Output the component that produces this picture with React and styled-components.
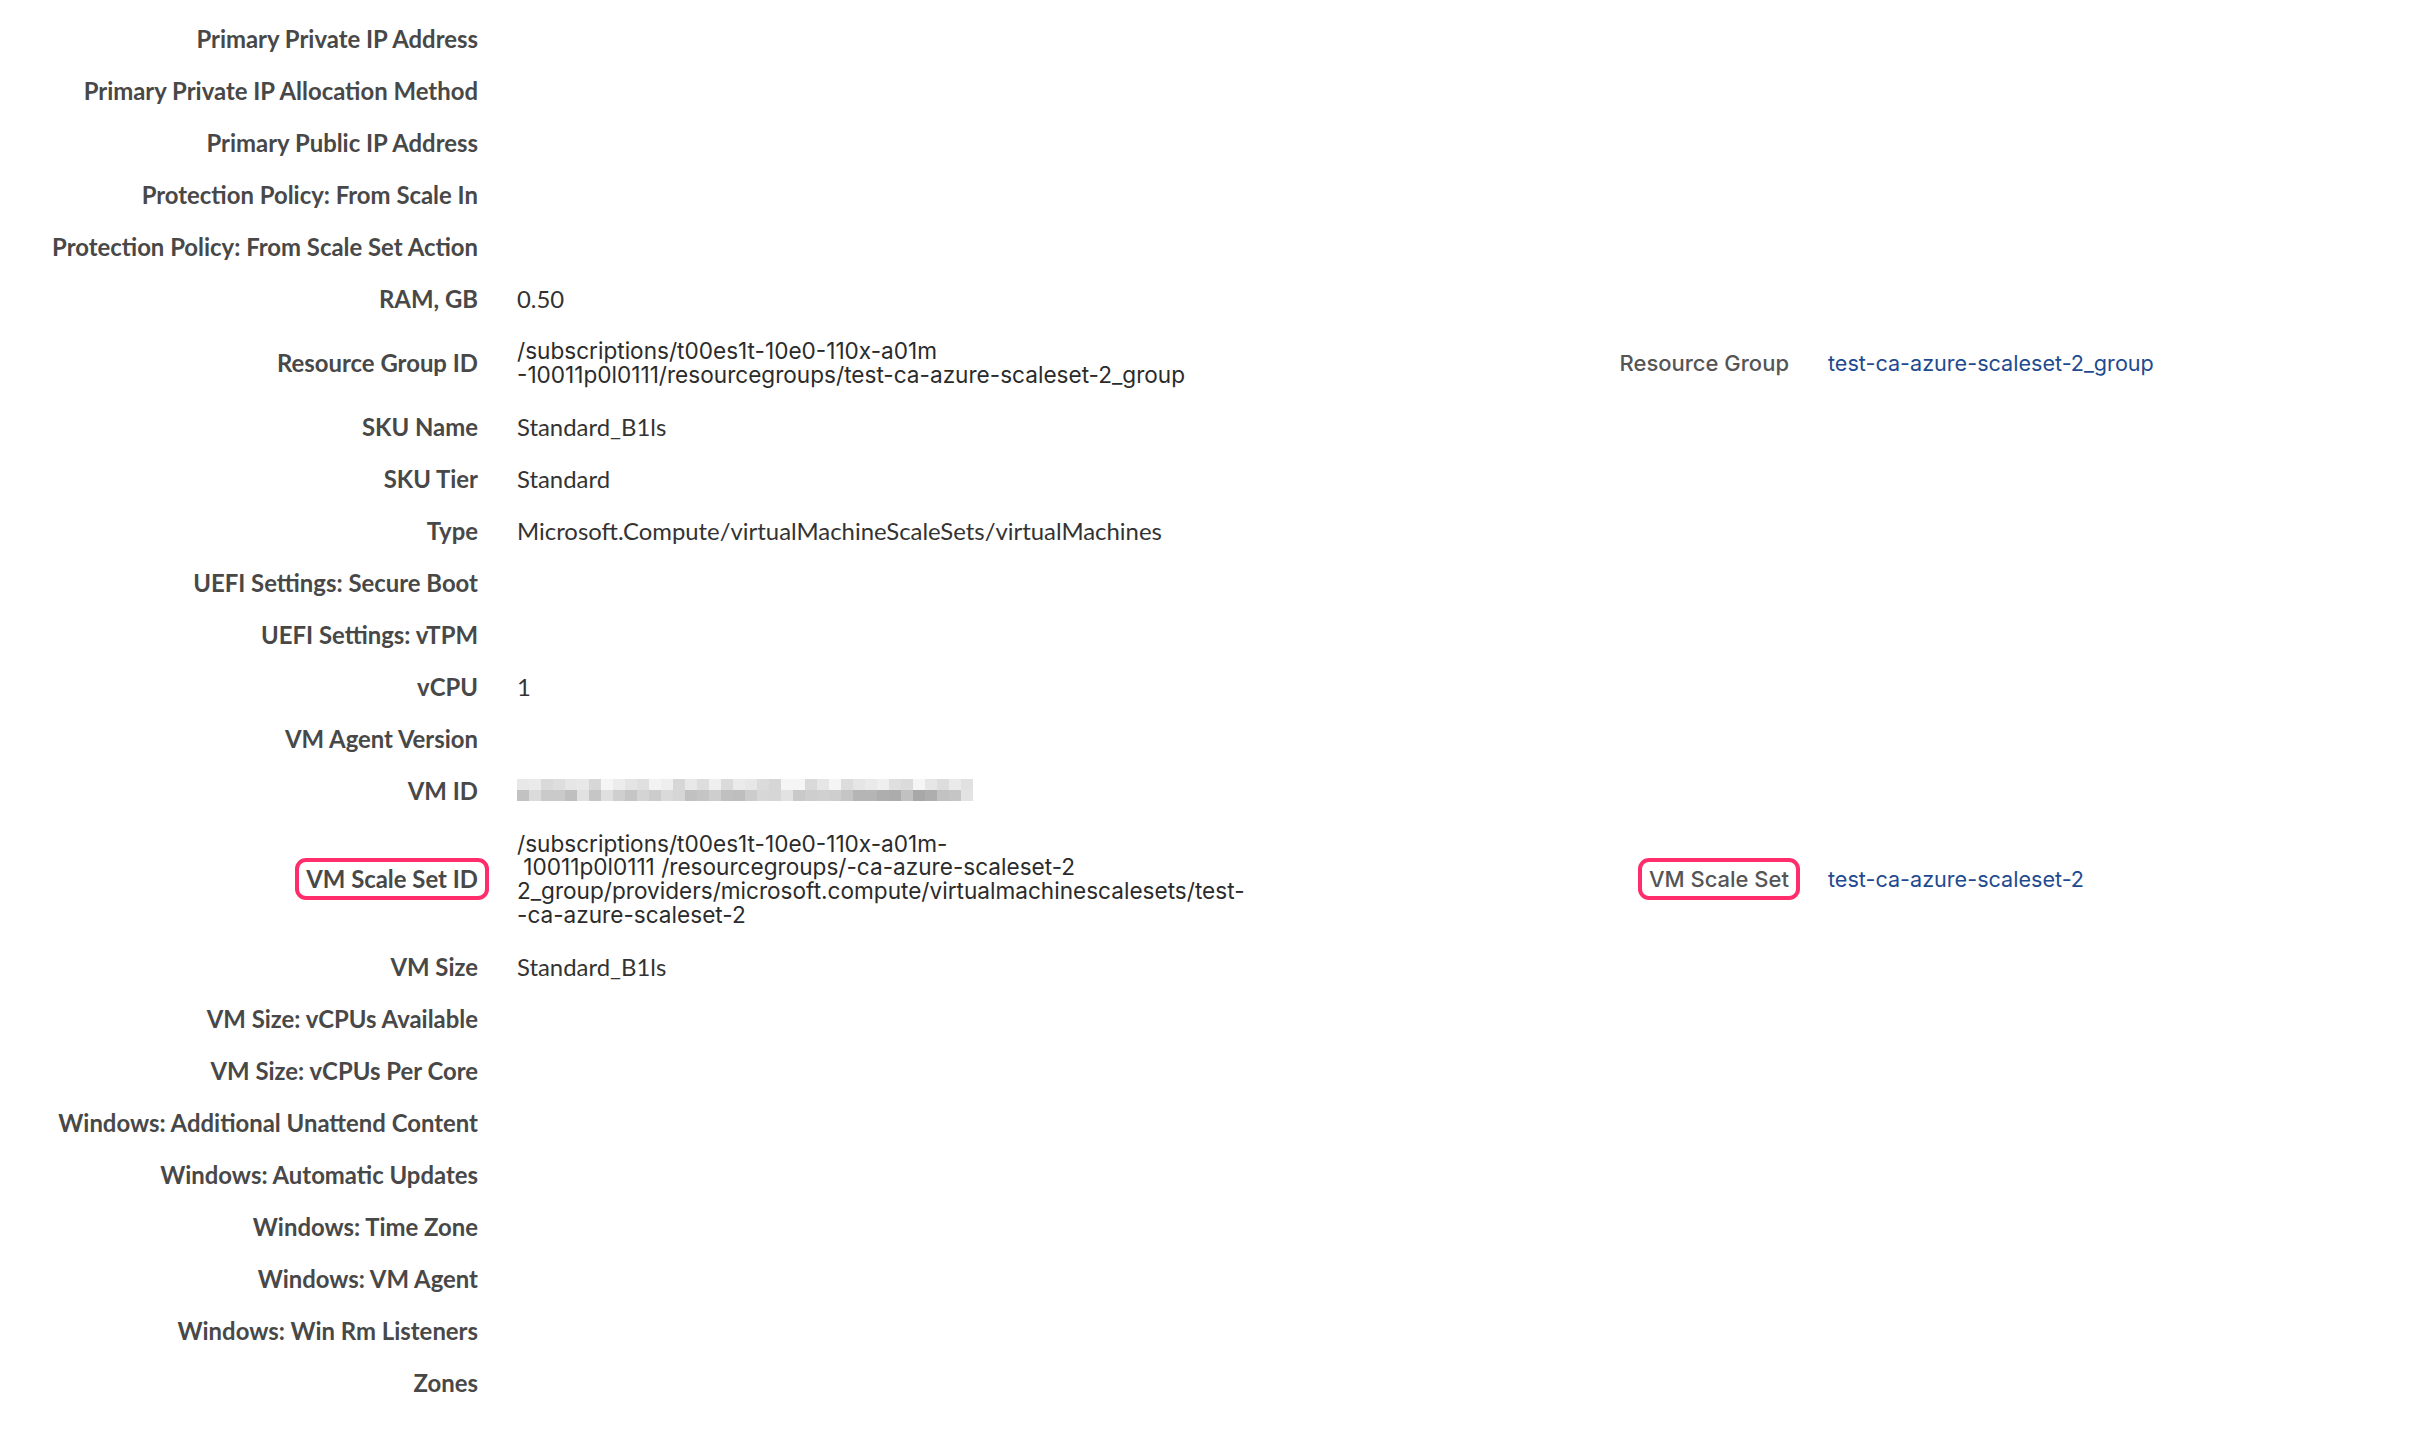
import React from "react";
import styled, { createGlobalStyle } from "styled-components";

const Global = createGlobalStyle`
  html, body { margin: 0; padding: 0; background: #ffffff; }
  body { font-family: Lato, "Open Sans", sans-serif; }
`;

const Page = styled.div`
  padding-top: 13px;
  display: flex;
  flex-direction: column;
`;

const Row = styled.div`
  display: grid;
  grid-template-columns: 478px 1063px 170px 1fr;
  column-gap: 39px;
  align-items: center;
  padding: 14px 0;
`;

const Label = styled.div`
  text-align: right;
  font-family: Lato, sans-serif;
  font-weight: 700;
  font-size: 23.9px;
  line-height: 24px;
  color: #484848;
  white-space: nowrap;
`;

const Value = styled.div`
  font-family: Lato, sans-serif;
  font-weight: 400;
  font-size: 23.9px;
  line-height: 24px;
  color: #333333;
  white-space: nowrap;
`;

const PathValue = styled.div`
  display: flex;
  flex-direction: column;
  font-family: Inter, "Liberation Sans", sans-serif;
  font-size: 22.6px;
  line-height: 23.75px;
  color: #2b2b2b;
  white-space: pre;
`;

const SideLabel = styled.div`
  text-align: right;
  font-family: Inter, "Liberation Sans", sans-serif;
  font-weight: 500;
  font-size: 22px;
  line-height: 24px;
  color: #555555;
  white-space: nowrap;
`;

const SideLink = styled.a`
  font-family: Inter, "Liberation Sans", sans-serif;
  font-size: 21.6px;
  line-height: 24px;
  color: #1f4a8f;
  text-decoration: none;
  white-space: nowrap;
`;

const Highlight = styled.span`
  display: inline-block;
  padding: 0 2px;
  margin-right: -2px;
  line-height: 24px;
  outline: 4px solid #ff2d6b;
  outline-offset: 5.5px;
  border-radius: 2px;
`;

const blurCells = (() => {
  const cells = [];
  let seed = 7;
  const rnd = () => {
    seed = (seed * 9301 + 49297) % 233280;
    return seed / 233280;
  };
  const cols = 38;
  for (let r = 0; r < 2; r++) {
    for (let c = 0; c < cols; c++) {
      const base = r === 0 ? 212 : 188;
      const v = Math.round(base + rnd() * 40 - (c > 26 && c < 37 && r === 1 ? 25 : 0));
      const g = Math.max(150, Math.min(245, v));
      cells.push({ x: c * 12, y: r * 11, fill: `rgb(${g},${g},${g})` });
    }
  }
  return cells;
})();

const Blurred = () => (
  <svg width="458" height="22" viewBox="0 0 458 22" aria-hidden="true">
    {blurCells.map((cell, i) => (
      <rect key={i} x={cell.x} y={cell.y} width="12" height="11" fill={cell.fill} />
    ))}
  </svg>
);

const rows = [
  { label: "Primary Private IP Address" },
  { label: "Primary Private IP Allocation Method" },
  { label: "Primary Public IP Address" },
  { label: "Protection Policy: From Scale In" },
  { label: "Protection Policy: From Scale Set Action" },
  { label: "RAM, GB", value: "0.50" },
  {
    label: "Resource Group ID",
    lines: [
      "/subscriptions/t00es1t-10e0-110x-a01m",
      "-10011p0l0111/resourcegroups/test-ca-azure-scaleset-2_group",
    ],
    sideLabel: "Resource Group",
    sideValue: "test-ca-azure-scaleset-2_group",
  },
  { label: "SKU Name", value: "Standard_B1ls" },
  { label: "SKU Tier", value: "Standard" },
  { label: "Type", value: "Microsoft.Compute/virtualMachineScaleSets/virtualMachines" },
  { label: "UEFI Settings: Secure Boot" },
  { label: "UEFI Settings: vTPM" },
  { label: "vCPU", value: "1" },
  { label: "VM Agent Version" },
  { label: "VM ID", blurred: true },
  {
    label: "VM Scale Set ID",
    highlight: true,
    lines: [
      "/subscriptions/t00es1t-10e0-110x-a01m-",
      " 10011p0l0111 /resourcegroups/-ca-azure-scaleset-2",
      "2_group/providers/microsoft.compute/virtualmachinescalesets/test-",
      "-ca-azure-scaleset-2",
    ],
    sideLabel: "VM Scale Set",
    sideHighlight: true,
    sideValue: "test-ca-azure-scaleset-2",
  },
  { label: "VM Size", value: "Standard_B1ls" },
  { label: "VM Size: vCPUs Available" },
  { label: "VM Size: vCPUs Per Core" },
  { label: "Windows: Additional Unattend Content" },
  { label: "Windows: Automatic Updates" },
  { label: "Windows: Time Zone" },
  { label: "Windows: VM Agent" },
  { label: "Windows: Win Rm Listeners" },
  { label: "Zones" },
];

export default function App() {
  return (
    <>
      <Global />
      <Page>
        {rows.map((r) => (
          <Row key={r.label}>
            <Label>{r.highlight ? <Highlight>{r.label}</Highlight> : r.label}</Label>
            {r.lines ? (
              <PathValue>
                {r.lines.map((l, i) => (
                  <span key={i}>{l}</span>
                ))}
              </PathValue>
            ) : r.blurred ? (
              <Value>
                <Blurred />
              </Value>
            ) : (
              <Value>{r.value || ""}</Value>
            )}
            <SideLabel>
              {r.sideLabel ? (
                r.sideHighlight ? <Highlight>{r.sideLabel}</Highlight> : r.sideLabel
              ) : null}
            </SideLabel>
            <div>{r.sideValue ? <SideLink href="#">{r.sideValue}</SideLink> : null}</div>
          </Row>
        ))}
      </Page>
    </>
  );
}
